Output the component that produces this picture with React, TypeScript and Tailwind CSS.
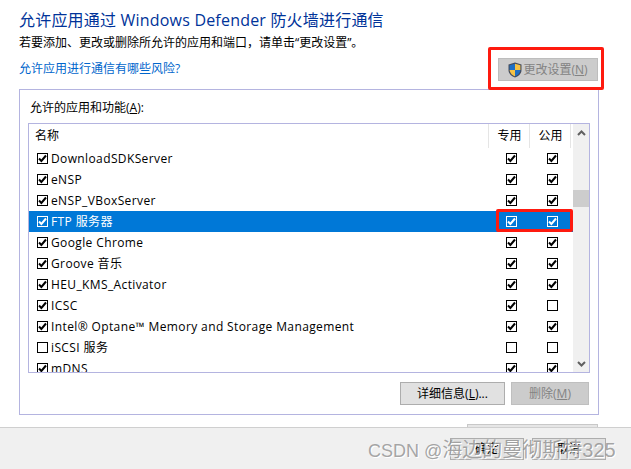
import React from "react";

const FONT = "font-['Open_Sans','Noto_Sans_CJK_SC',sans-serif]";

const rows = [
  { name: "DownloadSDKServer", own: true, a: true, b: true },
  { name: "eNSP", own: true, a: true, b: true },
  { name: "eNSP_VBoxServer", own: true, a: true, b: true },
  { name: "FTP 服务器", own: true, a: true, b: true, selected: true },
  { name: "Google Chrome", own: true, a: true, b: true },
  { name: "Groove 音乐", own: true, a: true, b: true },
  { name: "HEU_KMS_Activator", own: true, a: true, b: true },
  { name: "ICSC", own: true, a: true, b: false },
  { name: "Intel® Optane™ Memory and Storage Management", own: true, a: true, b: true },
  { name: "iSCSI 服务", own: false, a: false, b: false },
  { name: "mDNS", own: true, a: true, b: true },
];

function Check({ on, light }: { on: boolean; light?: boolean }) {
  return (
    <span className={`flex h-[11px] w-[11px] shrink-0 items-center justify-center border ${light ? "border-white" : "border-black bg-white"}`}>
      {on && (
        <svg width="9" height="9" viewBox="0 0 9 9" fill="none">
          <path d="M1 4.5 L3.4 7 L8 1.5" stroke={light ? "#fff" : "#000"} strokeWidth="2" />
        </svg>
      )}
    </span>
  );
}

function Shield() {
  return (
    <svg width="14" height="16" viewBox="0 0 14 16" className="shrink-0">
      <path d="M7 0.5 L13.5 2.5 V8 C13.5 12 10 14.5 7 15.5 C4 14.5 0.5 12 0.5 8 V2.5 Z" fill="#444c5c" />
      <path d="M7 1.8 L12.4 3.3 V8 H7 Z" fill="#f6c244" />
      <path d="M7 1.8 L1.6 3.3 V8 H7 Z" fill="#1f6fc4" />
      <path d="M7 8 H12.4 C12.2 11 9.6 13.4 7 14.3 Z" fill="#1f6fc4" />
      <path d="M7 8 H1.6 C1.8 11 4.4 13.4 7 14.3 Z" fill="#f6c244" />
    </svg>
  );
}

function Row({ row }: { row: (typeof rows)[number] }) {
  const sel = !!row.selected;
  return (
    <div className={`flex h-[21px] shrink-0 items-center ${sel ? "bg-[#0078d7] text-white" : "text-black"}`}>
      <div className="flex w-[460px] items-center pl-[8px]">
        <Check on={row.own} light={sel} />
        <span className="ml-[3px] whitespace-nowrap tracking-[0.38px]">{row.name}</span>
      </div>
      <div className="flex w-[41px] justify-center pl-[3px]">
        <Check on={row.a} light={sel} />
      </div>
      <div className="flex w-[41px] justify-center pl-[3px]">
        <Check on={row.b} light={sel} />
      </div>
    </div>
  );
}

export default function App() {
  return (
    <div className={`relative flex h-[469px] w-[631px] flex-col overflow-hidden bg-white text-[12px] text-black ${FONT}`}>
      <div className="flex h-[427px] shrink-0 flex-col pl-[19px] pr-[27px] pt-[10px]">
        <h1 className="h-[21px] text-[16px] leading-[21px] tracking-[0.2px] text-[#003399]">允许应用通过 Windows Defender 防火墙进行通信</h1>
        <p className="mt-[3px] h-[17px] leading-[17px]">若要添加、更改或删除所允许的应用和端口，请单击“更改设置”。</p>
        <div className="mt-[7px] flex h-[23px] items-start justify-between">
          <a className="mt-[2px] leading-[17px] text-[#0066cc]">允许应用进行通信有哪些风险?</a>
          <button className="mr-[6px] flex h-[23px] w-[100px] items-center justify-center gap-[1px] border border-[#bdbdbd] bg-[#cccccc] text-[#838383]">
            <Shield />
            <span>更改设置(<span className="underline">N</span>)</span>
          </button>
        </div>
        <section className="mt-[8px] flex h-[326px] w-[580px] flex-col border border-[#b4b4e0] pl-[8px] pr-[8px] pt-[9px]">
          <div className="ml-[2px] h-[17px] leading-[17px]">允许的应用和功能(<span className="underline">A</span>):</div>
          <div className="mt-[7px] flex h-[250px] flex-col overflow-hidden border border-[#b4b4e0]">
            <div className="flex min-h-0 flex-1">
              <div className="flex min-w-0 flex-1 flex-col overflow-hidden">
                <div className="flex h-[24px] shrink-0 items-center">
                  <div className="h-full w-[460px] border-r border-[#e5e5e5] pl-[6px] leading-[23px]">名称</div>
                  <div className="h-full w-[41px] border-r border-[#e5e5e5] pl-[1px] text-center leading-[23px]">专用</div>
                  <div className="h-full w-[41px] border-r border-[#e5e5e5] pl-[1px] text-center leading-[23px]">公用</div>
                </div>
                {rows.map((r) => (
                  <Row key={r.name} row={r} />
                ))}
              </div>
              <div className="flex w-[16px] shrink-0 flex-col items-center bg-[#f0f0f0] pt-[6px]">
                <svg width="9" height="6" viewBox="0 0 9 6" fill="none">
                  <path d="M1 5 L4.5 1.5 L8 5" stroke="#606060" strokeWidth="2" />
                </svg>
                <div className="mt-[54px] h-[17px] w-full bg-[#cdcdcd]" />
                <div className="flex-1" />
                <svg width="9" height="6" viewBox="0 0 9 6" fill="none" className="mb-[5px]">
                  <path d="M1 1 L4.5 4.5 L8 1" stroke="#606060" strokeWidth="2" />
                </svg>
              </div>
            </div>
          </div>
          <div className="mr-[1px] mt-[9px] flex justify-end gap-[6px]">
            <button className="h-[23px] w-[105px] border border-[#adadad] bg-[#e1e1e1]">
              详细信息(<span className="underline">L</span>)...
            </button>
            <button className="h-[23px] w-[78px] border border-[#bfbfbf] bg-[#cccccc] text-[#838383]">
              删除(<span className="underline">M</span>)
            </button>
          </div>
        </section>
      </div>
      <footer className="relative flex flex-1 justify-end gap-[8px] border-t border-[#cfcfcf] bg-[#f0f0f0] pr-[25px] pt-[10px]">
        <button className="h-[22px] w-[74px] border border-[#adadad] bg-[#e1e1e1]">确定</button>
        <button className="h-[22px] w-[74px] border border-[#adadad] bg-[#e1e1e1]">取消</button>
      </footer>
      {/* 标注框和水印 */}
      <div className="absolute left-[467px] top-[424px] h-[3px] w-[131px] border border-b-0 border-[#c8c8c8] bg-[#e6e6e6]" />
      <div className="absolute left-[488px] top-[47px] h-[43px] w-[116px] rounded-[2px] border-[3px] border-[#fe1a0f]" />
      <div className="absolute left-[496px] top-[209px] h-[23px] w-[77px] rounded-[2px] border-[3px] border-[#fe1a0f]" />
      <div className="absolute left-[368px] top-[438px] whitespace-nowrap font-['Liberation_Sans','Noto_Sans_CJK_SC',sans-serif] text-[18px] leading-[24px] text-[#8f8f8f]/80 [text-shadow:1px_1px_0_#ffffff]">
        CSDN @<span className="text-[20px]">海边的曼彻斯特325</span>
      </div>
    </div>
  );
}
